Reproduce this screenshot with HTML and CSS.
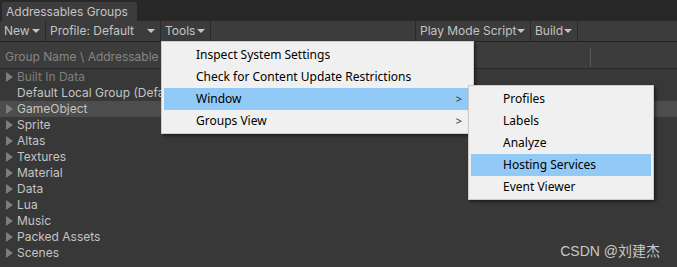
FILE: index.html
```html
<!DOCTYPE html>
<html>
<head>
<meta charset="utf-8">
<link rel="stylesheet" href="styles.css">
</head>
<body>
<div class="window">
  <div class="tabbar">
    <div class="tab">Addressables Groups</div>
  </div>
  <div class="toolbar">
    <div class="tb-btn w-new">New<span class="caret"></span></div>
    <div class="tb-btn w-profile">Profile: Default<span class="caret"></span></div>
    <div class="tb-btn w-tools">Tools<span class="caret"></span></div>
    <div class="tb-spacer"></div>
    <div class="tb-btn w-play">Play Mode Script<span class="caret"></span></div>
    <div class="tb-btn w-build">Build<span class="caret"></span></div>
    <div class="tb-rest"></div>
  </div>
  <div class="header">
    <div class="hcol hcol-name">Group Name \ Addressable Name</div>
    <div class="hdiv"></div>
    <div class="hcol hcol-rest"></div>
  </div>
  <div class="tree">
    <div class="row disabled"><span class="arrow"></span>Built In Data</div>
    <div class="row"><span class="noarrow"></span>Default Local Group (Default)</div>
    <div class="row selected"><span class="arrow"></span>GameObject</div>
    <div class="row"><span class="arrow"></span>Sprite</div>
    <div class="row"><span class="arrow"></span>Altas</div>
    <div class="row"><span class="arrow"></span>Textures</div>
    <div class="row"><span class="arrow"></span>Material</div>
    <div class="row"><span class="arrow"></span>Data</div>
    <div class="row"><span class="arrow"></span>Lua</div>
    <div class="row"><span class="arrow"></span>Music</div>
    <div class="row"><span class="arrow"></span>Packed Assets</div>
    <div class="row"><span class="arrow"></span>Scenes</div>
  </div>

  <div class="menu menu-tools">
    <div class="mi">Inspect System Settings</div>
    <div class="mi">Check for Content Update Restrictions</div>
    <div class="mi hl">Window<span class="sub">&gt;</span></div>
    <div class="mi">Groups View<span class="sub">&gt;</span></div>
  </div>
  <div class="menu menu-window">
    <div class="mi">Profiles</div>
    <div class="mi">Labels</div>
    <div class="mi">Analyze</div>
    <div class="mi hl">Hosting Services</div>
    <div class="mi">Event Viewer</div>
  </div>

  <div class="watermark">CSDN @刘建杰</div>
</div>
</body>
</html>
```

FILE: styles.css
```css
html, body {
  margin: 0;
  padding: 0;
  background: #383838;
}
.window {
  position: relative;
  width: 677px;
  height: 267px;
  overflow: hidden;
  background: #383838;
  font-family: Inter, "Noto Sans", sans-serif;
  font-size: 12px;
  color: #c4c4c4;
}
.tabbar {
  height: 21px;
  background: #282828;
  display: flex;
  align-items: flex-end;
  padding-left: 2px;
}
.tab {
  height: 19px;
  width: 135px;
  background: #3c3c3c;
  border-radius: 2px 2px 0 0;
  line-height: 19px;
  padding-left: 4px;
  box-sizing: border-box;
  color: #c4c4c4;
}
.toolbar {
  height: 20px;
  background: #3c3c3c;
  border-bottom: 1px solid #232323;
  display: flex;
}
.tb-btn {
  height: 20px;
  line-height: 20px;
  padding-left: 4px;
  box-sizing: border-box;
  border-right: 1px solid #292929;
  position: relative;
  white-space: nowrap;
}
.caret {
  position: absolute;
  right: 5px;
  top: 8px;
  width: 0;
  height: 0;
  border-left: 4px solid transparent;
  border-right: 4px solid transparent;
  border-top: 4px solid #c4c4c4;
}
.w-new { width: 46px; }
.w-profile { width: 115px; }
.w-tools { width: 50px; }
.tb-spacer { width: 204px; border-right: 1px solid #292929; }
.w-play { width: 115px; }
.w-build { width: 47px; }
.tb-rest { flex: 1; }

.header {
  height: 26px;
  background: #3c3c3c;
  border-bottom: 1px solid #292929;
  display: flex;
  align-items: center;
}
.hcol {
  height: 26px;
  line-height: 30px;
  box-sizing: border-box;
}
.hcol-name {
  width: 590px;
  padding-left: 5px;
  color: #858585;
  white-space: nowrap;
  overflow: hidden;
}
.hdiv {
  width: 1px;
  height: 19px;
  margin-top: 4px;
  background: #5a5a5a;
}
.hcol-rest { flex: 1; }

.tree {
  display: flex;
  flex-direction: column;
}
.row {
  height: 16px;
  line-height: 16px;
  display: flex;
  align-items: center;
  white-space: nowrap;
  color: #c4c4c4;
}
.row.selected { background: #4d4d4d; }
.row.disabled { color: #7e7e7e; }
.arrow {
  width: 0;
  height: 0;
  border-top: 5px solid transparent;
  border-bottom: 5px solid transparent;
  border-left: 7px solid #7d7d7d;
  margin-left: 6px;
  margin-right: 4px;
}
.noarrow {
  width: 17px;
}

.menu {
  position: absolute;
  background: #f0f0f0;
  border: 1px solid #cccccc;
  box-shadow: 2px 2px 3px rgba(0,0,0,0.45);
  padding: 2px;
  font-family: "Noto Sans", "Open Sans", sans-serif;
  font-size: 12px;
  color: #000;
  box-sizing: border-box;
}
.menu-tools {
  left: 161px;
  top: 41px;
  width: 313px;
  height: 93px;
  z-index: 1;
}
.menu-window {
  left: 468px;
  top: 85px;
  width: 186px;
  height: 115px;
  z-index: 2;
}
.mi {
  height: 22px;
  line-height: 22px;
  padding-left: 32px;
  position: relative;
  white-space: nowrap;
}
.mi.hl { background: #91c9f7; }
.sub {
  position: absolute;
  right: 9px;
  top: 0;
  color: #333;
  font-size: 11px;
}
.watermark {
  position: absolute;
  right: 17px;
  top: 240px;
  font-family: "Liberation Sans", "Noto Sans CJK SC", sans-serif;
  font-size: 14px;
  color: #c8c8c8;
}
```
